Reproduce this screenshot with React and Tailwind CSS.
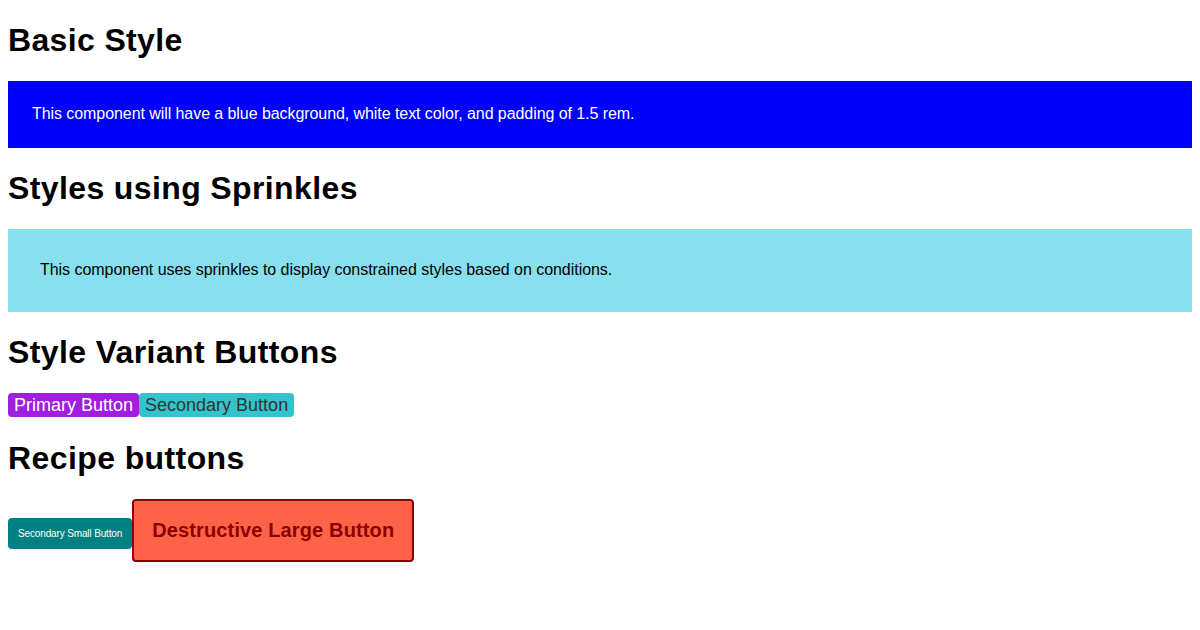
export default function App() {
  return (
    <div className="min-h-screen bg-white px-2 text-black font-['Liberation_Sans',Arial,sans-serif]">
      <h1 className="my-[21.44px] text-[32px] leading-[1.2] font-bold tracking-[0.35px]">Basic Style</h1>
      <div className="bg-[#0000ff] p-6 text-base leading-[1.17] tracking-[-0.07px] text-white">
        This component will have a blue background, white text color, and padding of 1.5 rem.
      </div>

      <h1 className="my-[21.44px] text-[32px] leading-[1.2] font-bold tracking-[0.38px]">Styles using Sprinkles</h1>
      <div className="bg-[#88dfee] p-8 text-base leading-[1.17] tracking-[-0.04px] text-black">
        This component uses sprinkles to display constrained styles based on conditions.
      </div>

      <h1 className="my-[21.44px] text-[32px] leading-[1.2] font-bold tracking-[0.38px]">Style Variant Buttons</h1>
      <div className="flex">
        <button className="flex h-6 items-center rounded-[4px] bg-[#a01ee0] px-[6px] text-[18px] text-white">
          Primary Button
        </button>
        <button className="flex h-6 items-center rounded-[4px] bg-[#33c3cd] px-[6px] text-[18px] text-[#333333]">
          Secondary Button
        </button>
      </div>

      <h1 className="my-[21.44px] text-[32px] leading-[1.2] font-bold tracking-[0.4px]">Recipe buttons</h1>
      <div className="flex items-baseline">
        <button className="rounded-[4px] bg-[#008080] p-[10px] text-[10px] leading-[1.15] tracking-[-0.14px] text-white">
          Secondary Small Button
        </button>
        <button className="rounded-[4px] border-2 border-[#8b0000] bg-[#ff6347] p-[18px] text-[20px] leading-[1.15] font-bold tracking-[0.13px] text-[#8b0000]">
          Destructive Large Button
        </button>
      </div>
    </div>
  )
}
